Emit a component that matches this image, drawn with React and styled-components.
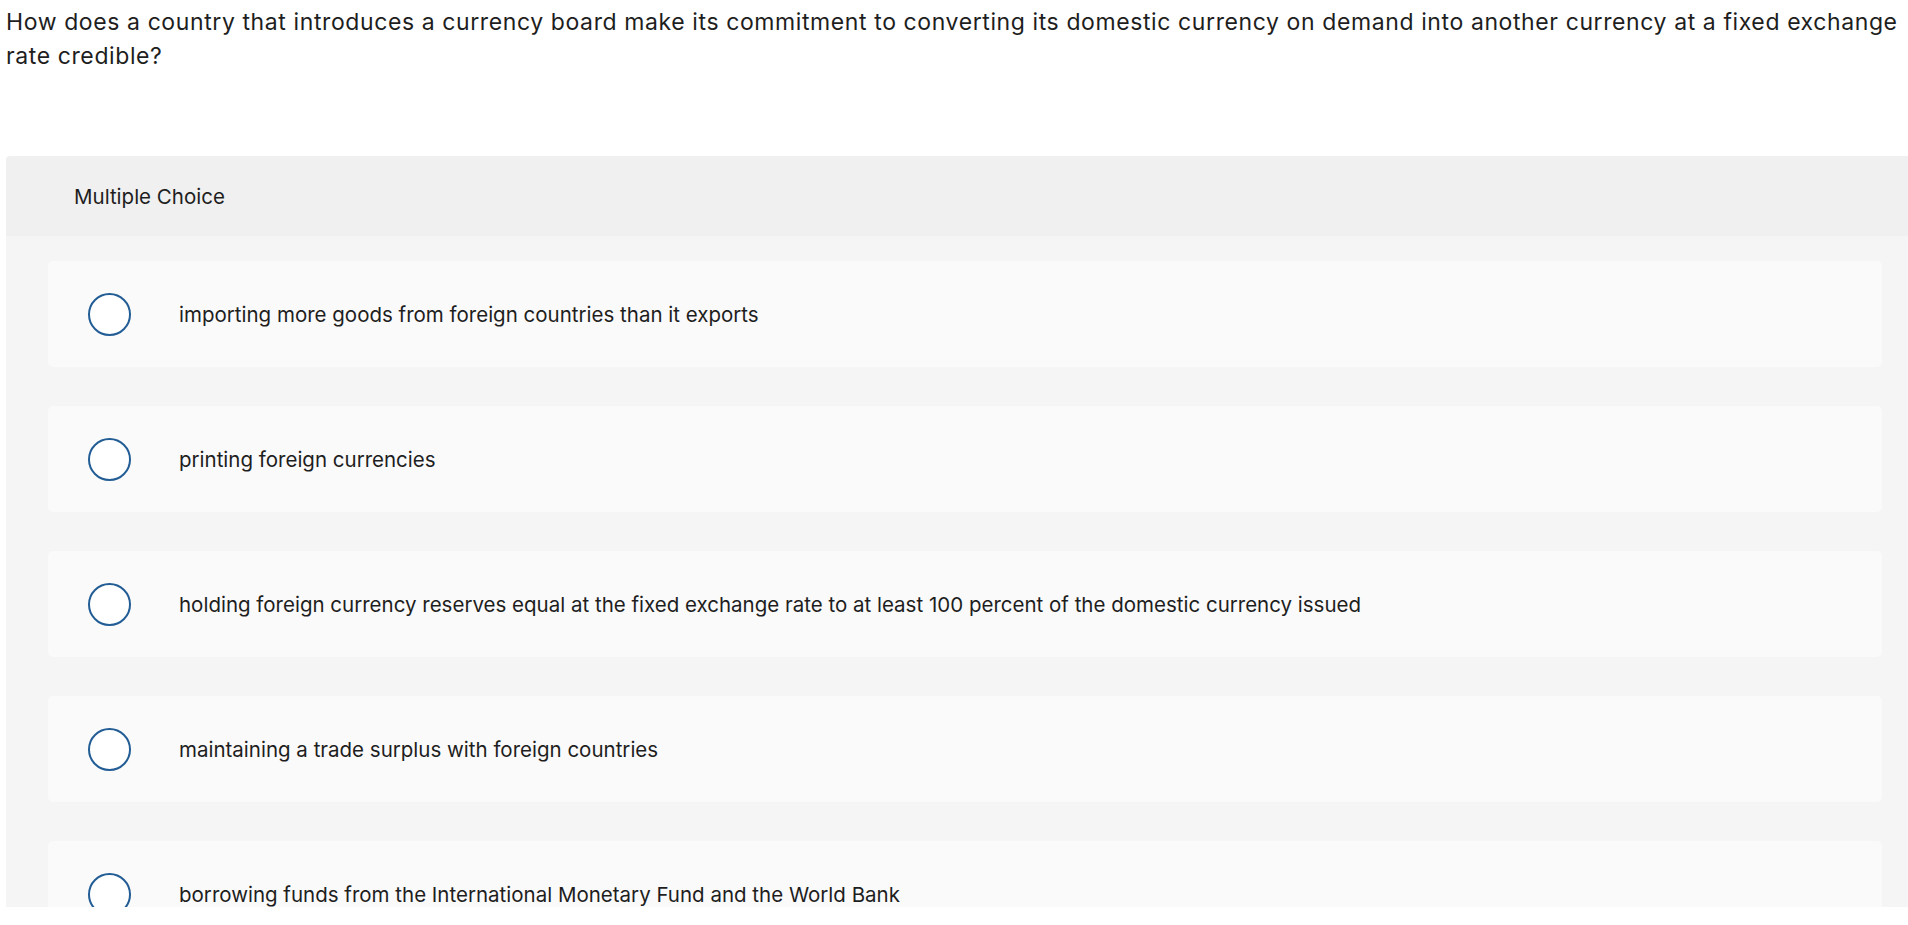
import React from 'react'
import styled, { createGlobalStyle } from 'styled-components'

const GlobalStyle = createGlobalStyle`
  html, body {
    margin: 0;
    padding: 0;
    background: #ffffff;
    overflow: hidden;
  }
  body {
    font-family: Inter, 'Noto Sans', sans-serif;
    color: #1e1e1e;
  }
`

const Page = styled.div`
  height: 907px;
  overflow: hidden;
`

const Question = styled.p`
  margin: 0;
  padding: 5px 6px 0 6px;
  font-size: 23px;
  letter-spacing: 0.6px;
  line-height: 34px;
  color: #1e1e1e;
`

const Panel = styled.section`
  margin: 83px 0 0 6px;
  border-top-left-radius: 4px;
  overflow: hidden;
`

const PanelHeader = styled.div`
  height: 80px;
  display: flex;
  align-items: center;
  padding-left: 68px;
  background: #f0f0f0;
  font-size: 20.5px;
  color: #1e1e1e;
`

const Choices = styled.div`
  display: flex;
  flex-direction: column;
  gap: 39px;
  padding: 25px 26px 40px 42px;
  background: #f5f5f5;
`

const Choice = styled.label`
  display: flex;
  align-items: center;
  height: 106px;
  padding-left: 40px;
  background: #fafafa;
  border-radius: 5px;
  cursor: pointer;
`

const Radio = styled.span`
  flex: none;
  width: 39px;
  height: 39px;
  border: 2.5px solid #235d95;
  border-radius: 50%;
  background: #ffffff;
`

const ChoiceText = styled.span`
  margin-left: 48px;
  font-size: 20.5px;
  color: #1e1e1e;
`

const choices = [
  'importing more goods from foreign countries than it exports',
  'printing foreign currencies',
  'holding foreign currency reserves equal at the fixed exchange rate to at least 100 percent of the domestic currency issued',
  'maintaining a trade surplus with foreign countries',
  'borrowing funds from the International Monetary Fund and the World Bank',
]

const App = () => {
  return (
    <>
      <GlobalStyle />
      <Page>
        <Question>
          How does a country that introduces a currency board make its
          commitment to converting its domestic currency on demand into another
          currency at a fixed exchange rate credible?
        </Question>
        <Panel>
          <PanelHeader>Multiple Choice</PanelHeader>
          <Choices>
            {choices.map((c) => (
              <Choice key={c}>
                <Radio />
                <ChoiceText>{c}</ChoiceText>
              </Choice>
            ))}
          </Choices>
        </Panel>
      </Page>
    </>
  )
}

export default App
